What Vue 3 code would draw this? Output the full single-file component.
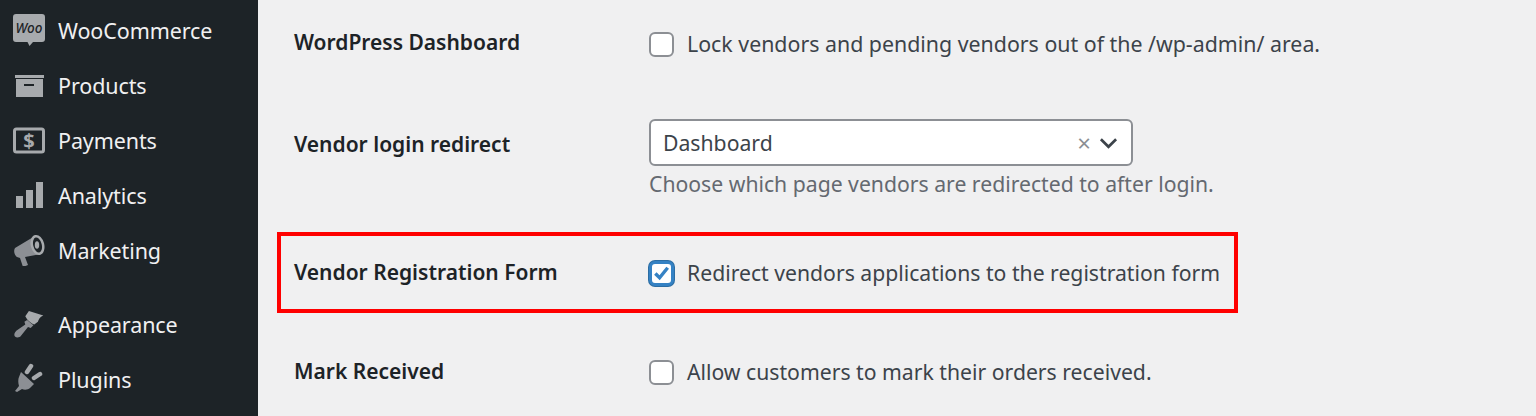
<script setup>
const menuTop = [
  { key: 'woo', label: 'WooCommerce' },
  { key: 'products', label: 'Products' },
  { key: 'payments', label: 'Payments' },
  { key: 'analytics', label: 'Analytics' },
  { key: 'marketing', label: 'Marketing' },
]
const menuBottom = [
  { key: 'appearance', label: 'Appearance' },
  { key: 'plugins', label: 'Plugins' },
]
</script>

<template>
  <div class="page">
    <aside class="sidebar">
      <ul class="menu first">
        <li v-for="m in menuTop" :key="m.key" class="item">
          <span class="icon">
            <svg v-if="m.key === 'woo'" viewBox="0 0 32 32" width="32" height="32">
              <path fill="#a7aaad" d="M3 0h26a3 3 0 0 1 3 3v22a3 3 0 0 1-3 3H20l-3.500 4-2-4H3a3 3 0 0 1-3-3V3a3 3 0 0 1 3-3z"/>
              <text x="16" y="18.500" text-anchor="middle" class="wootext">Woo</text>
            </svg>
            <svg v-else-if="m.key === 'products'" viewBox="0 0 32 32" width="32" height="32">
              <path fill="#a7aaad" d="M2 6h29v3H2z"/>
              <path fill="#a7aaad" fill-rule="evenodd" d="M3 10h27v18H3zM11 15v2h10v-2z"/>
            </svg>
            <svg v-else-if="m.key === 'payments'" viewBox="0 0 32 32" width="32" height="32">
              <rect x="1.500" y="5" width="29" height="23" rx="2" fill="none" stroke="#a7aaad" stroke-width="3"/>
              <text x="16" y="23.500" text-anchor="middle" class="dollar">$</text>
            </svg>
            <svg v-else-if="m.key === 'analytics'" viewBox="0 0 32 32" width="32" height="32">
              <path fill="#a7aaad" d="M3 17h7v12H3zM13 11h7v18h-7zM23 3h7v26h-7z"/>
            </svg>
            <svg v-else viewBox="0 0 32 32" width="32" height="32">
              <path fill="#8c8f94" d="M2 14 22 2l6 18-16 3 3 8-5 2-3-9-3-1C2 22 0 17 2 14z"/>
              <ellipse cx="24.500" cy="11" rx="5.500" ry="9" fill="#1d2327" stroke="#a7aaad" stroke-width="2.500" transform="rotate(-14 24.500 11)"/>
              <ellipse cx="24" cy="11" rx="2.200" ry="3.800" fill="#a7aaad"/>
            </svg>
          </span>
          <span class="label">{{ m.label }}</span>
        </li>
      </ul>
      <ul class="menu">
        <li v-for="m in menuBottom" :key="m.key" class="item">
          <span class="icon">
            <svg v-if="m.key === 'appearance'" viewBox="0 0 32 32" width="32" height="32">
              <g transform="translate(1.500 2) scale(.9)">
                <path fill="#8c8f94" d="M14 11l7 6-3 3-3-1-8 10c-1.500 2-5 2-6.500.500S0 25 2 23l10-7-1-3z"/>
                <path fill="#a7aaad" d="M12 7l4-6 16 5c-4 2-5 4-6 7l-4 3c-4-1-8-5-10-9z"/>
              </g>
            </svg>
            <svg v-else viewBox="0 0 32 32" width="32" height="32">
              <path fill="#8c8f94" d="M8 9 21 21 17 25c-2 2-6 2-8 1l-5 3-2-1 4-5c-1-3-1-7 0-9z"/>
              <path fill="none" stroke="#a7aaad" stroke-width="4.500" stroke-linecap="round" d="M14 9l4-6M21 15l6-4"/>
            </svg>
          </span>
          <span class="label">{{ m.label }}</span>
        </li>
      </ul>
    </aside>
    <main class="content">
      <section class="row r1">
        <div class="name">WordPress Dashboard</div>
        <label class="field check wide"><span class="box"></span>Lock vendors and pending vendors out of the /wp-admin/ area.</label>
      </section>
      <section class="row r2">
        <div class="name">Vendor login redirect</div>
        <div class="field">
          <div class="select">
            <span>Dashboard</span>
            <span class="controls">
              <span class="clear">×</span>
              <svg viewBox="0 0 20 12" width="19" height="12"><path d="M2 2l8 8 8-8" fill="none" stroke="#3c434a" stroke-width="2.800"/></svg>
            </span>
          </div>
          <p class="desc">Choose which page vendors are redirected to after login.</p>
        </div>
      </section>
      <section class="row r3">
        <div class="name">Vendor Registration Form</div>
        <label class="field check">
          <span class="box on">
            <svg viewBox="0 0 20 20" width="20" height="20"><path d="M3.500 10.500l4.500 4.500L16.500 4.500" fill="none" stroke="#3582c4" stroke-width="3.600"/></svg>
          </span>Redirect vendors applications to the registration form</label>
      </section>
      <section class="row r4">
        <div class="name">Mark Received</div>
        <label class="field check"><span class="box"></span>Allow customers to mark their orders received.</label>
      </section>
    </main>
  </div>
</template>

<style>
html, body { margin: 0; background: #f0f0f1; }
</style>

<style scoped>
.page {
  display: flex;
  width: 1536px;
  height: 416px;
  overflow: hidden;
  background: #f0f0f1;
  font-family: "Noto Sans", "Open Sans", sans-serif;
  color: #3c434a;
}
.sidebar { width: 258px; flex: none; background: #1d2327; color: #f0f0f1; padding-top: 3px; box-sizing: border-box; }
.menu { list-style: none; margin: 0; padding: 0; }
.menu.first { margin-bottom: 19px; }
.item { display: flex; align-items: center; height: 55px; padding-left: 13px; }
.icon { width: 45px; flex: none; display: flex; margin-bottom: 2px; }
.icon svg { display: block; }
.label { font-size: 21.500px; letter-spacing: -0.1px; }
.wootext { font: italic 500 13.500px "Noto Sans", sans-serif; fill: #1d2327; }
.dollar { font: 700 20px "Noto Sans", sans-serif; fill: #a7aaad; }
.content { flex: 1; padding-left: 36px; }
.row { display: flex; box-sizing: border-box; align-items: flex-start; }
.name { width: 355px; flex: none; font-weight: 600; color: #1d2327; font-size: 21px; line-height: 30px; }
.field { font-size: 21.200px; line-height: 30px; }
.wide { font-size: 21.350px; }
.check { display: flex; align-items: center; }
.box {
  width: 25px; height: 25px; box-sizing: border-box; flex: none; margin-right: 13px;
  background: #fff; border: 2px solid #8c8f94; border-radius: 6px;
  display: flex; align-items: center; justify-content: center;
}
.box.on { border: 3px solid #3582c4; box-shadow: 0 0 0 1px #2c6da3; }
.r1 { padding-top: 27px; height: 119px; }
.r1 .field { margin-top: 2px; }
.r2 { height: 113px; }
.r2 .name { padding-top: 10px; }
.select {
  width: 484px; height: 47px; box-sizing: border-box;
  background: #fff; border: 2px solid #8c8f94; border-radius: 6px;
  display: flex; align-items: center; justify-content: space-between;
  padding: 0 13px 0 12px;
}
.controls { display: flex; align-items: center; gap: 8px; }
.clear { color: #8c8f94; font-size: 24px; line-height: 1; }
.desc { margin: 3px 0 0; color: #646970; }
.r3 {
  width: 961px; height: 81px; margin-left: -17px; padding-left: 13px; padding-top: 21px;
  border: 4px solid #f00;
}
.r3 .field { margin-top: 1px; }
.r4 { padding-top: 43px; }
.r4 .field { margin-top: 1px; }
</style>
